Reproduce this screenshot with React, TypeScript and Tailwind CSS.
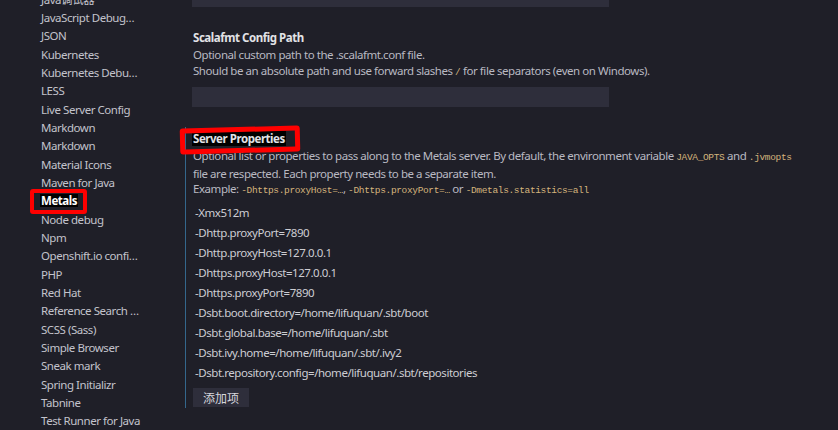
import React from 'react';

const navItems = [
  'Java调试器',
  'JavaScript Debug…',
  'JSON',
  'Kubernetes',
  'Kubernetes Debu…',
  'LESS',
  'Live Server Config',
  'Markdown',
  'Markdown',
  'Material Icons',
  'Maven for Java',
  'Metals',
  'Node debug',
  'Npm',
  'Openshift.io confi…',
  'PHP',
  'Red Hat',
  'Reference Search …',
  'SCSS (Sass)',
  'Simple Browser',
  'Sneak mark',
  'Spring Initializr',
  'Tabnine',
  'Test Runner for Java',
];

const properties = [
  '-Xmx512m',
  '-Dhttp.proxyPort=7890',
  '-Dhttp.proxyHost=127.0.0.1',
  '-Dhttps.proxyHost=127.0.0.1',
  '-Dhttps.proxyPort=7890',
  '-Dsbt.boot.directory=/home/lifuquan/.sbt/boot',
  '-Dsbt.global.base=/home/lifuquan/.sbt',
  '-Dsbt.ivy.home=/home/lifuquan/.sbt/.ivy2',
  '-Dsbt.repository.config=/home/lifuquan/.sbt/repositories',
];

const Code = ({ children }: { children: React.ReactNode }) => (
  <span className="font-['Liberation_Mono',monospace] text-[9.5px] tracking-[-0.35px] text-[#d4b47c]">{children}</span>
);

export default function App() {
  return (
    <div className="w-[838px] h-[430px] overflow-hidden bg-[#1f1f28] flex font-['Noto_Sans','Noto_Sans_CJK_SC',sans-serif] text-[11.5px] tracking-[-0.45px]">
      {/* Settings tree */}
      <div className="w-[180px] shrink-0 -mt-[10px] pl-[41px]">
        {navItems.map((item, i) =>
          item === 'Metals' ? (
            <div key={i} className="h-[18.35px] flex items-center relative">
              <span className="bg-black text-white font-bold leading-[13px] px-[1px] -ml-[1px]">{item}</span>
              <div className="absolute left-[-11px] top-[-3px] w-[57px] h-[25px] border-4 border-[#f00] rounded-[3px]" />
            </div>
          ) : (
            <div key={i} className="h-[18.35px] flex items-center text-[#c3c3cc] whitespace-nowrap">
              {item}
            </div>
          )
        )}
      </div>

      {/* Settings content */}
      <div className="flex-1 flex flex-col">
        <div className="ml-[12px] w-[417px] h-[7px] bg-[#2e2e3b]" />

        {/* Scalafmt Config Path */}
        <div className="ml-[5px] pl-[8px] pt-[22px]">
          <div className="h-[18px] leading-[18px] font-bold text-[#e2e2e6]">Scalafmt Config Path</div>
          <div className="text-[#b9b9c2] leading-[16px] whitespace-nowrap">
            <div>Optional custom path to the .scalafmt.conf file.</div>
            <div>
              Should be an absolute path and use forward slashes <Code>/</Code> for file separators (even on Windows).
            </div>
          </div>
          <div className="-ml-[1px] mt-[6px] w-[417px] h-[20px] bg-[#2e2e3b]" />
        </div>

        {/* Server Properties */}
        <div className="ml-[5px] mt-[20px] pt-[3px] pl-[7px] border-l border-[#34678c] pb-[1px] relative">
          <div className="h-[18px] leading-[18px] font-bold text-[#e2e2e6]">
            <span className="bg-black px-[1px] -ml-[1px]">Server Properties</span>
          </div>
          <div className="absolute left-[-6px] top-[0px] w-[120px] h-[26px] border-[5px] border-[#f00] rounded-[3px] -rotate-[1.5deg]" />
          <div className="text-[#b9b9c2] leading-[16px] whitespace-nowrap">
            <div>
              Optional list or properties to pass along to the Metals server. By default, the environment variable{' '}
              <Code>JAVA_OPTS</Code> and <Code>.jvmopts</Code>
            </div>
            <div>file are respected. Each property needs to be a separate item.</div>
            <div className="-mt-[1px]">
              Example: <Code>-Dhttps.proxyHost=…</Code>, <Code>-Dhttps.proxyPort=…</Code> or{' '}
              <Code>-Dmetals.statistics=all</Code>
            </div>
          </div>
          <div className="mt-[4px] flex flex-col">
            {properties.map((p, i) => (
              <div key={i} className="h-[20px] leading-[20px] pl-[2px] text-[#cdcdd3] whitespace-nowrap">
                {p}
              </div>
            ))}
          </div>
          <button className="mt-[5px] w-[56px] h-[19px] bg-[#2e2e3b] text-[#d6d6dc] text-[12px] tracking-normal font-['Noto_Sans_CJK_SC',sans-serif] leading-[19px]">
            添加项
          </button>
        </div>
      </div>
    </div>
  );
}
